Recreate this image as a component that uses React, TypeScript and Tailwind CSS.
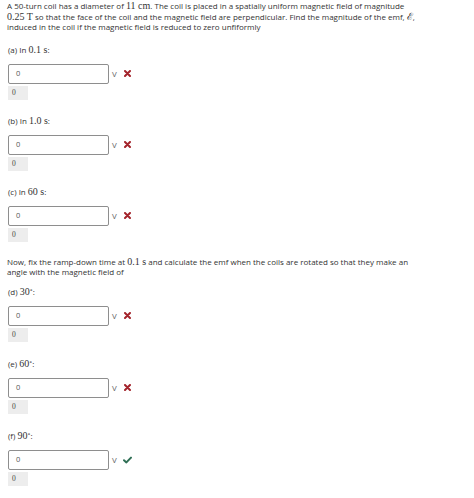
import React from "react";

const sans = { fontFamily: "'Open Sans', Lato, sans-serif" };
const serif = { fontFamily: "'Liberation Serif', 'DejaVu Serif', serif" };

function M({ children }: { children: React.ReactNode }) {
  return (
    <span className="text-[10px] leading-[0]" style={serif}>
      {children}
    </span>
  );
}

function Answer({ label, correct }: { label: React.ReactNode; correct?: boolean }) {
  return (
    <div className="flex flex-col">
      <div className="h-[10px] leading-[10px] text-[8px] text-[#333] whitespace-nowrap">{label}</div>
      <div className="mt-[9px] flex items-center">
        <div className="w-[101px] h-[20px] border border-[#8e8e8e] rounded-[2px] bg-white flex items-center pl-[7px] text-[7.5px] text-[#555]">
          0
        </div>
        <span className="ml-[3px] text-[8px] text-[#666]">V</span>
        {correct ? (
          <svg className="ml-[6px]" width="9" height="8" viewBox="0 0 9 8">
            <path d="M1 4.2 L3.4 6.4 L8 1.6" fill="none" stroke="#2f6f55" strokeWidth="2" strokeLinecap="round" strokeLinejoin="round" />
          </svg>
        ) : (
          <svg className="ml-[7px]" width="7" height="7" viewBox="0 0 7 7">
            <path d="M1 1 L6 6 M6 1 L1 6" stroke="#a3232b" strokeWidth="2" strokeLinecap="round" />
          </svg>
        )}
      </div>
      <div className="mt-[2px] w-[20px] h-[14px] bg-[#ededed] flex items-center pl-[4px] text-[7.5px] text-[#444]" style={serif}>0</div>
    </div>
  );
}

export default function App() {
  return (
    <div className="w-[474px] h-[498px] bg-white px-[7px] pt-[1px] text-[#333]" style={sans}>
      <p className="text-[8px] leading-[10.5px] whitespace-nowrap">
        A 50-turn coil has a diameter of <M>11 cm</M>. The coil is placed in a spatially uniform magnetic field of magnitude
        <br />
        <M>0.25 T</M> so that the face of the coil and the magnetic field are perpendicular. Find the magnitude of the emf, <M>ℰ</M>,
        <br />
        induced in the coil if the magnetic field is reduced to zero unfiformly
      </p>
      <div className="mt-[12px] flex flex-col gap-[16px] pl-[1px]">
        <Answer label={<>(a) In <M>0.1 s</M>:</>} />
        <Answer label={<>(b) In <M>1.0 s</M>:</>} />
        <Answer label={<>(c) In <M>60 s</M>:</>} />
      </div>
      <p className="mt-[15px] text-[8px] leading-[10.5px] whitespace-nowrap">
        Now, fix the ramp-down time at <M>0.1 s</M> and calculate the emf when the coils are rotated so that they make an
        <br />
        angle with the magnetic field of
      </p>
      <div className="mt-[9px] flex flex-col gap-[17px] pl-[1px]">
        <Answer label={<>(d) <M>30<sup className="text-[6px]">∘</sup></M>:</>} />
        <Answer label={<>(e) <M>60<sup className="text-[6px]">∘</sup></M>:</>} />
        <Answer label={<>(f) <M>90<sup className="text-[6px]">∘</sup></M>:</>} correct />
      </div>
    </div>
  );
}
